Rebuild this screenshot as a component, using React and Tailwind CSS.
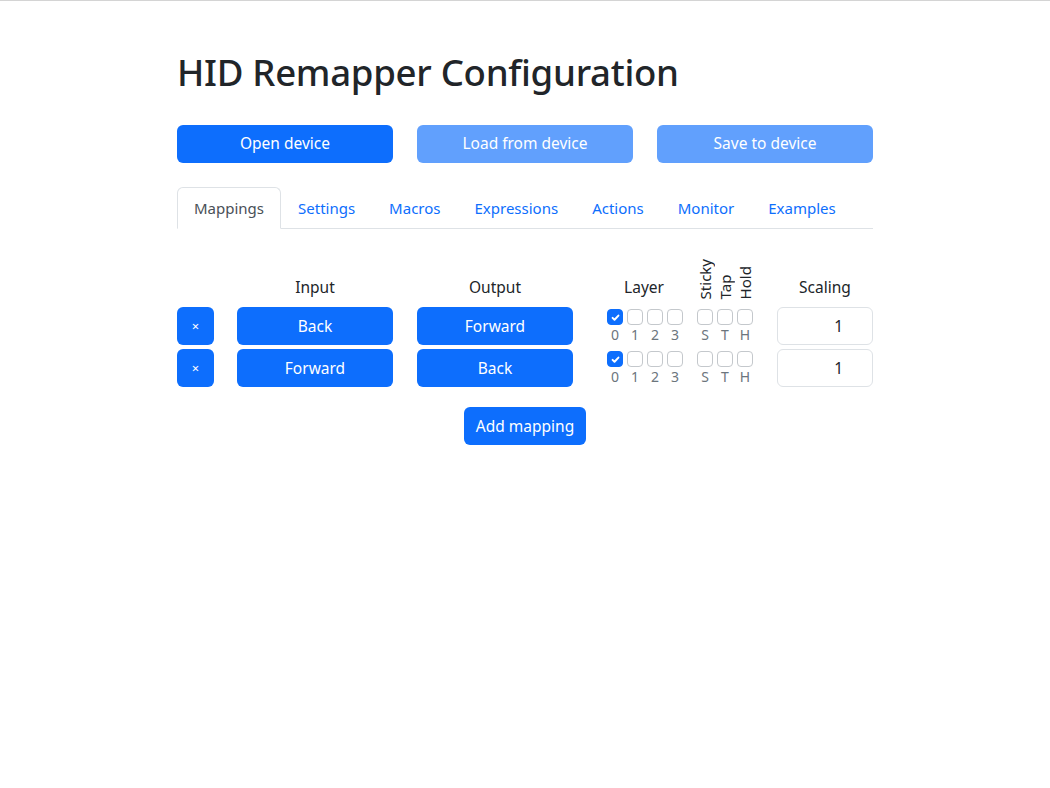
import React, { useState } from "react";

const font = { fontFamily: '"Noto Sans", "Open Sans", sans-serif' };

const Check = ({ checked }) => (
  <span
    className={
      "flex h-4 w-4 items-center justify-center rounded-[4px] border " +
      (checked ? "border-[#0d6efd] bg-[#0d6efd]" : "border-[#c4c8cc] bg-white")
    }
  >
    {checked && (
      <svg viewBox="0 0 20 20" className="h-[13px] w-[13px]">
        <path
          d="M5.5 10.5l3 3l6-6.5"
          fill="none"
          stroke="#fff"
          strokeWidth="3"
          strokeLinecap="round"
          strokeLinejoin="round"
        />
      </svg>
    )}
  </span>
);

const CheckCol = ({ checked, label }) => (
  <div className="flex w-4 flex-col items-center">
    <Check checked={checked} />
    <span className="mt-[2px] text-[14px] leading-4 text-[#6c757d]">{label}</span>
  </div>
);

const VLabel = ({ children }) => (
  <div className="flex w-4 justify-center">
    <span className="rotate-180 text-[15px] leading-4 text-[#212529] [writing-mode:vertical-rl]">
      {children}
    </span>
  </div>
);

const rowCls = "grid grid-cols-[60px_180px_180px_100px_80px_96px]";

const MappingRow = ({ input, output }) => (
  <div className={rowCls + " items-center"}>
    <button className="h-[38px] w-[37px] rounded-md bg-[#0d6efd] text-[13px] text-white">
      ×
    </button>
    <button className="h-[38px] w-[156px] rounded-md bg-[#0d6efd] text-white">
      {input}
    </button>
    <button className="h-[38px] w-[156px] rounded-md bg-[#0d6efd] text-white">
      {output}
    </button>
    <div className="flex gap-1 pl-[10px]">
      {["0", "1", "2", "3"].map((l, i) => (
        <CheckCol key={l} checked={i === 0} label={l} />
      ))}
    </div>
    <div className="flex gap-1">
      {["S", "T", "H"].map((l) => (
        <CheckCol key={l} label={l} />
      ))}
    </div>
    <input
      type="text"
      defaultValue="1"
      className="h-[38px] w-24 rounded-md border border-[#dee2e6] pr-[29px] text-right text-[#212529] outline-none"
    />
  </div>
);

export default function App() {
  const [tab, setTab] = useState("Mappings");
  const tabs = ["Mappings", "Settings", "Macros", "Expressions", "Actions", "Monitor", "Examples"];

  return (
    <div className="min-h-[788px] border-t border-[#d4d4d4] bg-white text-[15.5px] text-[#212529]" style={font}>
      <div className="mx-auto w-[720px] px-3 pt-[50px]">
        <h1 className="text-[36.6px] font-medium leading-[1.2] tracking-[-0.3px]">HID Remapper Configuration</h1>

        <div className="mt-[30px] grid grid-cols-3 gap-6">
          <button className="h-[38px] rounded-md bg-[#0d6efd] text-white">Open device</button>
          <button className="h-[38px] rounded-md bg-[#0d6efd] text-white opacity-65">Load from device</button>
          <button className="h-[38px] rounded-md bg-[#0d6efd] text-white opacity-65">Save to device</button>
        </div>

        <div className="mt-6 flex border-b border-[#dee2e6] text-[15px]">
          {tabs.map((t) => (
            <button
              key={t}
              onClick={() => setTab(t)}
              className={
                "-mb-px h-[42px] rounded-t-md border px-4 " +
                (tab === t
                  ? "border-[#dee2e6] border-b-white bg-white text-[#495057]"
                  : "border-transparent text-[#0d6efd]")
              }
            >
              {t}
            </button>
          ))}
        </div>

        <div className="mt-[30px]">
          <div className={rowCls + " items-end pb-2"}>
            <div />
            <div className="w-[156px] text-center leading-6">Input</div>
            <div className="w-[156px] text-center leading-6">Output</div>
            <div className="ml-[9px] w-[76px] text-center leading-6">Layer</div>
            <div className="flex gap-1">
              <VLabel>Sticky</VLabel>
              <VLabel>Tap</VLabel>
              <VLabel>Hold</VLabel>
            </div>
            <div className="text-center leading-6">Scaling</div>
          </div>

          <div className="flex flex-col gap-1">
            <MappingRow input="Back" output="Forward" />
            <MappingRow input="Forward" output="Back" />
          </div>

          <div className="mt-5 flex justify-center">
            <button className="h-[38px] rounded-md bg-[#0d6efd] px-3 text-white">Add mapping</button>
          </div>
        </div>
      </div>
    </div>
  );
}
